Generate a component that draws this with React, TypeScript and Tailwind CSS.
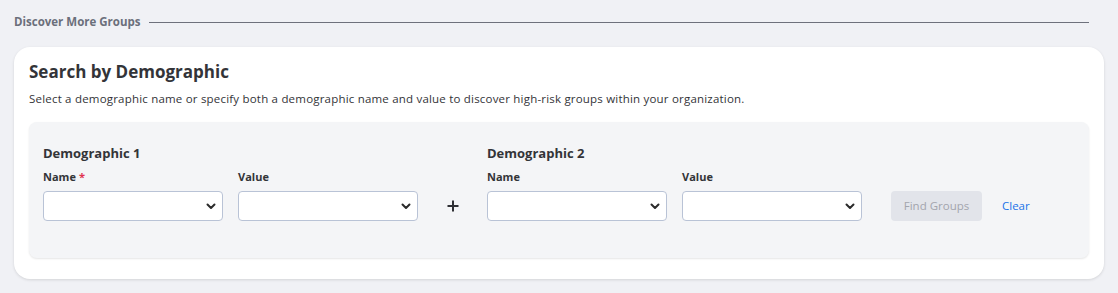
import React from "react";

const font = { fontFamily: "'Open Sans', 'Noto Sans', sans-serif" };

function Select() {
  return (
    <div className="relative flex h-[30px] w-[180px] items-center justify-end rounded-[4px] border border-[#b9c3d6] bg-white pr-[6px]">
      <svg width="10" height="7" viewBox="0 0 10 7" className="text-[#2b2b2b]">
        <path d="M1.5 1.5 L5 5 L8.5 1.5" fill="none" stroke="currentColor" strokeWidth="2" strokeLinecap="round" strokeLinejoin="round" />
      </svg>
    </div>
  );
}

function Field({ label, required }: { label: string; required?: boolean }) {
  return (
    <div className="flex flex-col">
      <div className="mb-[7px] h-[14px] text-[11px] font-bold leading-[14px] text-[#333438]">
        {label}
        {required && <span className="ml-[3px] text-[#e0334f]">*</span>}
      </div>
      <Select />
    </div>
  );
}

function Group({ title, required }: { title: string; required?: boolean }) {
  return (
    <div className="flex flex-col">
      <div className="mb-[8px] text-[13px] font-bold leading-[17px] text-[#333438]">{title}</div>
      <div className="flex gap-[15px]">
        <Field label="Name" required={required} />
        <Field label="Value" />
      </div>
    </div>
  );
}

export default function App() {
  return (
    <div className="min-h-[293px] w-[1118px] bg-[#f0f1f5] px-[14px] pt-[15px] pb-[14px]" style={font}>
      <div className="flex items-center pr-[15px]">
        <span className="text-[11.5px] font-bold leading-[14px] text-[#6b6f7b]">Discover More Groups</span>
        <div className="ml-[8px] h-px flex-1 bg-[#6e717c]" />
      </div>
      <div className="mt-[18px] rounded-[16px] bg-white px-[15px] pt-[14px] pb-[21px] shadow-[0_1px_3px_rgba(0,0,0,0.12)]">
        <h2 className="text-[17px] font-bold leading-[22px] text-[#333438]">Search by Demographic</h2>
        <p className="mt-[9px] text-[11.5px] leading-[14px] tracking-[0.2px] text-[#333438]">
          Select a demographic name or specify both a demographic name and value to discover high-risk groups within your organization.
        </p>
        <div className="mt-[16px] rounded-[8px] bg-[#f4f5f7] px-[14px] pt-[23px] pb-[37px] shadow-[0_1px_2px_rgba(0,0,0,0.1)]">
          <div className="flex items-end">
            <Group title="Demographic 1" required />
            <div className="flex h-[30px] w-[69px] items-center justify-center">
              <svg width="12" height="12" viewBox="0 0 12 12">
                <path d="M6 0.5 V11.5 M0.5 6 H11.5" stroke="#2f3035" strokeWidth="2" />
              </svg>
            </div>
            <Group title="Demographic 2" />
            <button className="ml-[29px] h-[30px] w-[91px] rounded-[4px] bg-[#e2e4ea] text-[11.5px] text-[#a2a5ad]">
              Find Groups
            </button>
            <button className="ml-[20px] h-[30px] text-[11.5px] text-[#1a73e8]">Clear</button>
          </div>
        </div>
      </div>
    </div>
  );
}
